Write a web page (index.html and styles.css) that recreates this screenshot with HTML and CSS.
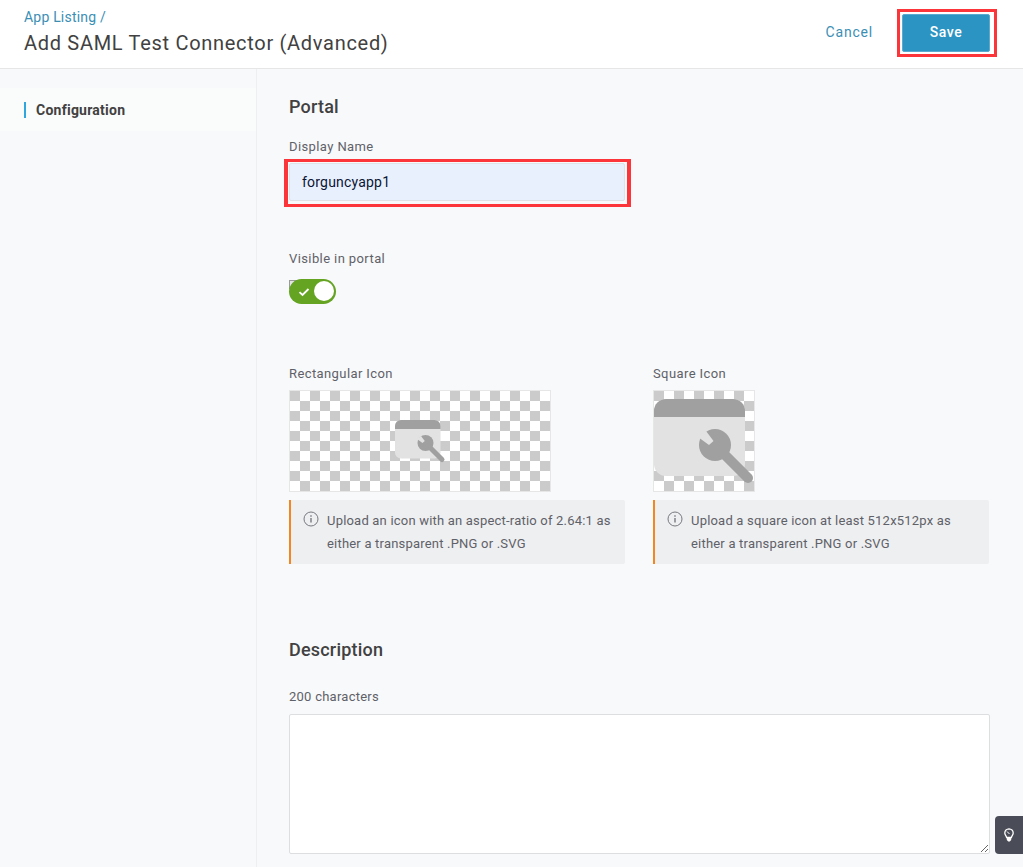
FILE: index.html
```html
<!DOCTYPE html>
<html lang="en">
<head>
<meta charset="utf-8">
<title>Add SAML Test Connector (Advanced)</title>
<link rel="stylesheet" href="styles.css">
</head>
<body>
<header class="topbar">
  <div class="titles">
    <a class="crumb" href="#">App Listing /</a>
    <h1 class="title">Add SAML Test Connector (Advanced)</h1>
  </div>
  <div class="actions">
    <a class="cancel" href="#">Cancel</a>
    <div class="save-mark"><button class="save" type="button">Save</button></div>
  </div>
</header>
<div class="body-row">
  <nav class="sidebar">
    <div class="nav-item"><span class="nav-text">Configuration</span></div>
  </nav>
  <main class="content">
    <h2 class="section-title">Portal</h2>
    <label class="label label-name">Display Name</label>
    <div class="name-field">
      <input class="name-input" type="text" value="forguncyapp1">
      <span class="red-mark"></span>
    </div>
    <div class="label label-visible">Visible in portal</div>
    <div class="toggle">
      <svg class="toggle-check" width="12" height="10" viewBox="0 0 12 10"><path d="M1.5 5.2 4.5 8 10.5 2" fill="none" stroke="#fff" stroke-width="1.8"/></svg>
      <span class="knob"></span>
    </div>
    <div class="icons-row">
      <section class="icon-col">
        <div class="label">Rectangular Icon</div>
        <div class="preview preview-rect">
          <svg class="app-icon" width="50" height="50" viewBox="0 0 100 100">
            <rect x="0" y="8" width="91" height="77" rx="12" fill="#e2e2e2"/>
            <path d="M0 26V20A12 12 0 0 1 12 8H79A12 12 0 0 1 91 20V26Z" fill="#a0a0a0"/>
            <circle cx="61" cy="54" r="16" fill="#a0a0a0"/>
            <path d="M61 54 94 87" stroke="#a0a0a0" stroke-width="10" stroke-linecap="round"/>
            <path d="M44 46 52 40 59.500 50 55 54Z" fill="#e2e2e2"/>
          </svg>
        </div>
        <div class="note">
          <svg class="info" width="16" height="16" viewBox="0 0 16 16"><circle cx="8" cy="8" r="7" fill="none" stroke="#77797f" stroke-width="1"/><path d="M8 7v4.500M8 4.300v1.500" stroke="#77797f" stroke-width="1.400"/></svg>
          <p class="note-text">Upload an icon with an aspect-ratio of 2.64:1 as either a transparent .PNG or .SVG</p>
        </div>
      </section>
      <section class="icon-col">
        <div class="label">Square Icon</div>
        <div class="preview preview-square">
          <svg class="app-icon" width="100" height="100" viewBox="0 0 100 100">
            <rect x="0" y="8" width="91" height="77" rx="12" fill="#e2e2e2"/>
            <path d="M0 26V20A12 12 0 0 1 12 8H79A12 12 0 0 1 91 20V26Z" fill="#a0a0a0"/>
            <circle cx="61" cy="54" r="16" fill="#a0a0a0"/>
            <path d="M61 54 94 87" stroke="#a0a0a0" stroke-width="10" stroke-linecap="round"/>
            <path d="M44 46 52 40 59.500 50 55 54Z" fill="#e2e2e2"/>
          </svg>
        </div>
        <div class="note">
          <svg class="info" width="16" height="16" viewBox="0 0 16 16"><circle cx="8" cy="8" r="7" fill="none" stroke="#77797f" stroke-width="1"/><path d="M8 7v4.500M8 4.300v1.500" stroke="#77797f" stroke-width="1.400"/></svg>
          <p class="note-text">Upload a square icon at least 512x512px as either a transparent .PNG or .SVG</p>
        </div>
      </section>
    </div>
    <h2 class="section-title section-desc">Description</h2>
    <label class="label label-chars">200 characters</label>
    <textarea class="desc-input"></textarea>
  </main>
</div>
<button class="help" type="button" aria-label="Tips">
  <svg width="10" height="15" viewBox="0 0 10 15"><path d="M5 .8A4.300 4.300 0 0 0 .8 5C.8 6.800 2.200 7.500 2.600 9.500H7.400C7.800 7.500 9.200 6.800 9.200 5A4.300 4.300 0 0 0 5 .8Z" fill="none" stroke="#fff" stroke-width="1.300"/><path d="M2.800 9.500H7.200V12L5.800 13.500H4.200L2.800 12Z" fill="#fff"/><path d="M3 3.500 5.500 6" stroke="#fff" stroke-width="1"/></svg>
</button>
</body>
</html>
```
FILE: styles.css
```css
* { box-sizing: border-box; }
html, body { height: 100%; }
body {
  margin: 0;
  height: 867px;
  overflow: hidden;
  background: #f8f9fb;
  font-family: Roboto, "Liberation Sans", sans-serif;
  color: #414141;
}
.topbar {
  height: 69px;
  background: #fff;
  border-bottom: 1px solid #e6e6e6;
  display: flex;
  justify-content: space-between;
  padding: 9px 26px 0 24px;
}
.titles { display: flex; flex-direction: column; }
.crumb {
  font-size: 14px;
  line-height: 17px;
  letter-spacing: 0.2px;
  color: #3b8fb5;
  text-decoration: none;
}
.title {
  margin: 4px 0 0;
  font-size: 20px;
  line-height: 26px;
  font-weight: 400;
  letter-spacing: 0.7px;
  color: #414141;
}
.actions { display: flex; align-items: flex-start; }
.cancel {
  margin: 15px 24px 0 0;
  font-size: 14px;
  line-height: 17px;
  letter-spacing: 0.8px;
  color: #3b8fb5;
  text-decoration: none;
}
.save-mark {
  border: 3px solid #fb3539;
  padding: 2px 4px 2px 2px;
  width: 100px;
  height: 48px;
  display: flex;
}
.save {
  width: 88px;
  height: 38px;
  border: 1px solid #5aaad0;
  border-radius: 2px;
  background: #2b94c3;
  color: #fff;
  font-family: inherit;
  font-size: 14px;
  font-weight: 500;
  letter-spacing: 0.5px;
  padding: 0 0 2px;
}
.body-row { display: flex; height: 798px; }
.sidebar {
  width: 257px;
  flex: none;
  border-right: 1px solid #eeeff1;
  padding-top: 19px;
}
.nav-item {
  height: 43px;
  background: #fafbfb;
  padding: 14px 0 0 24px;
}
.nav-text {
  display: block;
  border-left: 2px solid #2fa6de;
  padding-left: 10px;
  font-size: 14px;
  line-height: 16px;
  font-weight: 700;
  letter-spacing: 0.25px;
  color: #414141;
}
.content {
  flex: 1;
  padding: 27px 33px 0 32px;
  display: flex;
  flex-direction: column;
  align-items: flex-start;
}
.section-title {
  margin: 0;
  font-size: 18px;
  line-height: 22px;
  font-weight: 500;
  letter-spacing: 0.2px;
  color: #414141;
}
.label {
  display: block;
  font-size: 13px;
  line-height: 16px;
  letter-spacing: 0.4px;
  color: #5f6168;
}
.label-name { margin-top: 21px; }
.name-field {
  position: relative;
  margin-top: 8px;
  width: 336px;
  height: 38px;
}
.name-input {
  display: block;
  width: 100%;
  height: 100%;
  border: 1px solid #dfe3e8;
  border-radius: 2px;
  background: #e8f0fe;
  padding: 0 12px;
  font-family: inherit;
  font-size: 14px;
  letter-spacing: 0.2px;
  color: #0b1533;
}
.red-mark {
  position: absolute;
  top: -4px;
  left: -5px;
  right: -6px;
  bottom: -6px;
  border: 3px solid #fb3539;
  border-left-width: 4px;
  border-right-width: 4px;
  pointer-events: none;
}
.label-visible { margin-top: 50px; }
.toggle {
  position: relative;
  margin-top: 12px;
  width: 47px;
  height: 25px;
  border-radius: 13px;
  background: #65a323;
}
.toggle::before {
  content: "";
  position: absolute;
  z-index: -1;
  left: 0;
  top: 1px;
  width: 8px;
  height: 8px;
  border-left: 1px solid #9a9a9a;
  border-top: 1px solid #9a9a9a;
  background: #e4e4e4;
}
.toggle-check { position: absolute; left: 9px; top: 8px; }
.knob {
  position: absolute;
  right: 2px;
  top: 2px;
  width: 20px;
  height: 20px;
  border-radius: 50%;
  background: #fff;
}
.icons-row {
  margin-top: 62px;
  display: flex;
  gap: 28px;
}
.icon-col { width: 336px; }
.preview {
  position: relative;
  margin-top: 8px;
  height: 102px;
  border: 1px solid #e6e6e6;
  background: conic-gradient(#fff 25%, #cbcbcb 0 50%, #fff 0 75%, #cbcbcb 0) 0 0 / 20px 20px;
  display: flex;
  align-items: center;
  justify-content: center;
}
.preview-rect { width: 262px; }
.preview-square { width: 102px; }
.app-icon { display: block; overflow: visible; }
.note {
  margin-top: 8px;
  height: 64px;
  background: #eeeff1;
  border-left: 2px solid #f5861f;
  border-radius: 0 2px 2px 0;
  display: flex;
  padding: 9px 8px 0 12px;
}
.info { flex: none; margin: 2px 8px 0 0; }
.note-text {
  margin: 0;
  font-size: 13px;
  line-height: 23px;
  letter-spacing: 0.2px;
  color: #5f6168;
}
.section-desc { margin-top: 75px; }
.label-chars { margin-top: 28px; letter-spacing: 0.25px; }
.desc-input {
  display: block;
  margin-top: 9px;
  width: 701px;
  height: 140px;
  border: 1px solid #dcdee0;
  border-radius: 2px;
  background: #fff;
  resize: vertical;
}
.help {
  position: fixed;
  right: 0;
  top: 816px;
  width: 28px;
  height: 38px;
  padding: 0;
  border: 0;
  border-radius: 4px 0 0 4px;
  background: #4a4d57;
  display: flex;
  align-items: center;
  justify-content: center;
}
```
